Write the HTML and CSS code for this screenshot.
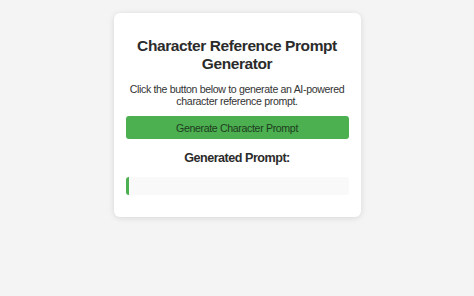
FILE: index.html
```html
<!DOCTYPE html>
<html>
<head>
<meta charset="utf-8">
<link rel="stylesheet" href="styles.css">
</head>
<body>
<div class="card">
  <h1 class="title">Character Reference Prompt Generator</h1>
  <p class="intro">Click the button below to generate an AI-powered character reference prompt.</p>
  <button class="gen-btn">Generate Character Prompt</button>
  <h2 class="sub">Generated Prompt:</h2>
  <div class="output"></div>
</div>
</body>
</html>
```
FILE: styles.css
```css
html, body {
  margin: 0;
  padding: 0;
}
body {
  background: #f4f4f4;
  font-family: "Liberation Sans", Arial, sans-serif;
  color: #333;
  display: flex;
  justify-content: center;
  padding-top: 13px;
  height: 296px;
  box-sizing: border-box;
}
.card {
  width: 247px;
  box-sizing: border-box;
  background: #fff;
  border-radius: 6px;
  box-shadow: 0 1px 6px rgba(0,0,0,0.12);
  padding: 24px 12px 22px;
  align-self: flex-start;
  display: flex;
  flex-direction: column;
  align-items: stretch;
  text-align: center;
}
.title {
  font-size: 15.5px;
  line-height: 17.5px;
  letter-spacing: -0.4px;
  font-weight: bold;
  margin: 0;
  color: #2b2b2b;
}
.intro {
  font-size: 10.6px;
  line-height: 11.5px;
  letter-spacing: -0.35px;
  margin: 12px 0 0;
  color: #333;
}
.gen-btn {
  margin-top: 9px;
  height: 23px;
  background: #4caf50;
  border: none;
  border-radius: 3px;
  font-family: "Liberation Sans", Arial, sans-serif;
  font-size: 10.6px;
  letter-spacing: -0.35px;
  color: #1e3d1f;
  padding: 0;
}
.sub {
  font-size: 12.6px;
  line-height: 15px;
  letter-spacing: -0.5px;
  font-weight: bold;
  margin: 12px 0 0;
  color: #2b2b2b;
}
.output {
  margin-top: 11px;
  height: 18px;
  background: #f9f9f9;
  border-left: 3px solid #4caf50;
  border-radius: 3px;
}
```
